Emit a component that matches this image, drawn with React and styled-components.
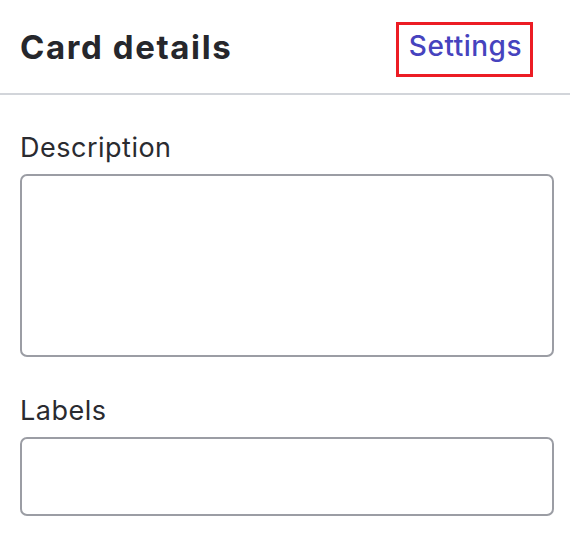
import React from "react";
import styled, { createGlobalStyle } from "styled-components";

const Global = createGlobalStyle`
    body {
        margin: 0;
        background: #ffffff;
        font-family: Inter, "Noto Sans", sans-serif;
        color: #25262b;
    }
`;

const Panel = styled.div`
    width: 570px;
`;

const Header = styled.div`
    display: flex;
    align-items: center;
    justify-content: space-between;
    height: 95px;
    padding: 0 37px 0 20px;
    box-sizing: border-box;
    border-bottom: 2px solid #d2d5da;
`;

const Title = styled.h1`
    margin: 0;
    font-size: 33px;
    font-weight: 700;
    letter-spacing: 1.6px;
    color: #26272c;
`;

const SettingsLink = styled.a`
    align-self: flex-start;
    margin-top: 22px;
    display: flex;
    align-items: center;
    height: 55px;
    padding: 0 8px 7px 10px;
    box-sizing: border-box;
    border: 3px solid #ec1c24;
    font-size: 28px;
    font-weight: 500;
    letter-spacing: 0.5px;
    color: #4643be;
    text-decoration: none;
`;

const Body = styled.div`
    padding: 37px 16px 0 20px;
    display: flex;
    flex-direction: column;
`;

const Field = styled.div`
    display: flex;
    flex-direction: column;
    margin-bottom: 38px;
`;

const Label = styled.label`
    font-size: 27px;
    font-weight: 400;
    letter-spacing: 0.5px;
    color: #2a2b30;
    margin-bottom: 10px;
    line-height: 32px;
`;

const Box = styled.div`
    height: ${(p) => p.$h}px;
    border: 2px solid #9b9da4;
    border-radius: 7px;
    box-sizing: border-box;
`;

const App = () => (
    <Panel>
        <Global />
        <Header>
            <Title>Card details</Title>
            <SettingsLink href="#">Settings</SettingsLink>
        </Header>
        <Body>
            <Field>
                <Label>Description</Label>
                <Box $h={183} />
            </Field>
            <Field>
                <Label>Labels</Label>
                <Box $h={79} />
            </Field>
        </Body>
    </Panel>
);

export default App;
